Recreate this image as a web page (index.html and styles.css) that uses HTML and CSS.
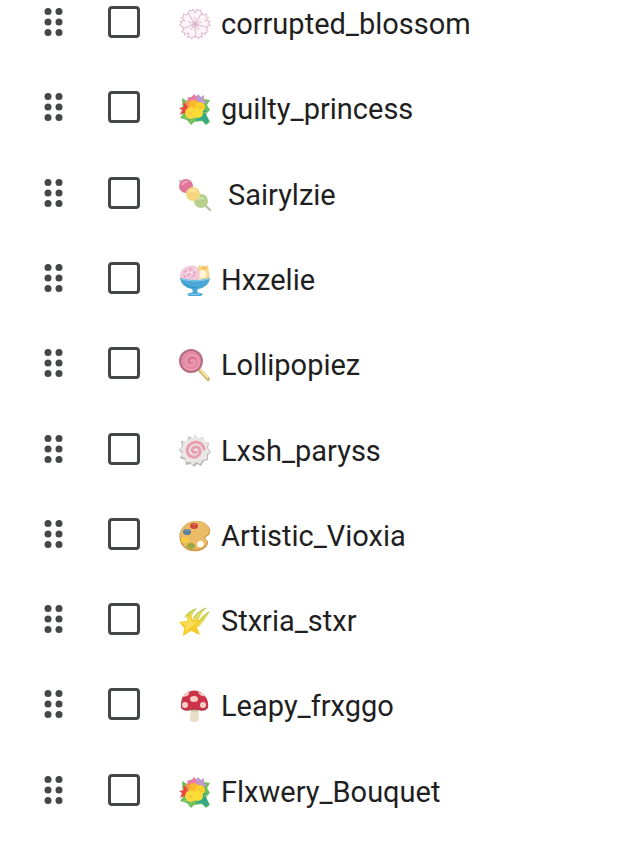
FILE: index.html
```html
<!DOCTYPE html>
<html lang="en">
<head>
  <meta charset="UTF-8">
  <meta name="viewport" content="width=device-width, initial-scale=1.0">
  <title>Checklist</title>
  <link rel="stylesheet" href="styles.css">
</head>
<body>
  <!-- Shared shapes -->
  <svg class="sprite" aria-hidden="true">
    <symbol id="dots" viewBox="0 0 40 60">
      <circle cx="10" cy="9" r="7"/><circle cx="32" cy="9" r="7"/>
      <circle cx="10" cy="30" r="7"/><circle cx="32" cy="30" r="7"/>
      <circle cx="10" cy="51" r="7"/><circle cx="32" cy="51" r="7"/>
    </symbol>
    <symbol id="petal" viewBox="0 0 32 32">
      <path d="M16 15 10 9 8 6 10 5 10 2 13 3 14 1 16 5 18 1 19 3 22 2 22 5 24 6 22 9Z"/>
      <path d="M16 14V9"/>
    </symbol>
    <symbol id="bouquet" viewBox="0 0 32 32">
      <path fill="#6cbf5a" d="M3 5 8 8 11 4 17 3 25 6 31 7 28 12 31 17 27 21 31 29 27 32 23 28 15 29 12 32 8 27 1 25 4 21Z"/>
      <path fill="#35a987" d="M20 18 28 17 27 22 30 28 27 31 23 27 17 28Z"/>
      <path fill="#ee78a8" d="M8 10 9 4 12 5 15 1 18 4 20 8 17 12 10 13Z"/>
      <path fill="#bd9bd0" d="M17 5 19 1 22 4 25 2 25 7 28 9 24 12 19 10Z"/>
      <path fill="#e9473f" d="M0 15 5 14 4 10 9 11 13 12 13 18 10 22 5 20 1 22 3 17Z"/>
      <path fill="#f4934c" d="M6 9 11 7 17 10 15 14 9 15Z"/>
      <circle cx="15" cy="12" r="5" fill="#f9b92f"/>
      <circle cx="21" cy="14" r="5" fill="#fdcf2b"/>
      <circle cx="12" cy="20" r="6" fill="#f8d83c"/>
      <circle cx="19" cy="20" r="5" fill="#fbdc35"/>
      <path fill="none" stroke="#f0b52c" d="M13 12 16 13M20 14 22 15M10 20 13 21"/>
      <path fill="none" stroke="#96d174" d="M4 25 8 24M11 29 13 27M25 20 28 19"/>
    </symbol>
  </svg>

  <ul class="checklist">
    <li class="item">
      <button class="handle" type="button" aria-label="Move corrupted_blossom"><svg><use href="#dots"/></svg></button>
      <input type="checkbox" id="item-1">
      <label for="item-1">
        <svg class="emoji" viewBox="0 0 32 32" aria-hidden="true">
          <g class="blossom">
            <use href="#petal"/>
            <use href="#petal" transform="rotate(72 16 16)"/>
            <use href="#petal" transform="rotate(144 16 16)"/>
            <use href="#petal" transform="rotate(216 16 16)"/>
            <use href="#petal" transform="rotate(288 16 16)"/>
          </g>
          <circle cx="16" cy="16" r="2" fill="#dab5cb"/>
        </svg>
        <span>corrupted_blossom</span>
      </label>
    </li>
    <li class="item">
      <button class="handle" type="button" aria-label="Move guilty_princess"><svg><use href="#dots"/></svg></button>
      <input type="checkbox" id="item-2">
      <label for="item-2">
        <svg class="emoji" aria-hidden="true"><use href="#bouquet"/></svg>
        <span>guilty_princess</span>
      </label>
    </li>
    <li class="item">
      <button class="handle" type="button" aria-label="Move Sairylzie"><svg><use href="#dots"/></svg></button>
      <input type="checkbox" id="item-3">
      <label for="item-3">
        <svg class="emoji" viewBox="0 0 32 32" aria-hidden="true">
          <path d="M1 2 31 31" stroke="#b4b9a4" stroke-width="2" stroke-linecap="round"/>
          <circle cx="7" cy="7" r="7" fill="#e0769b"/>
          <path d="M3 6Q5 2 9 3" fill="none" stroke="#f0a0b9" stroke-width="2"/>
          <circle cx="22" cy="22" r="7" fill="#b7d08e"/>
          <path d="M19 20Q21 18 25 20" fill="none" stroke="#d2e2b0" stroke-width="2"/>
          <circle cx="14" cy="15" r="7" fill="#f4d680"/>
          <path d="M11 13Q13 10 17 12" fill="none" stroke="#fae8ab" stroke-width="2"/>
        </svg>
        <span class="spaced">Sairylzie</span>
      </label>
    </li>
    <li class="item">
      <button class="handle" type="button" aria-label="Move Hxzelie"><svg><use href="#dots"/></svg></button>
      <input type="checkbox" id="item-4">
      <label for="item-4">
        <svg class="emoji" viewBox="0 0 32 32" aria-hidden="true">
          <path fill="#f5d78f" d="M18 5 20 1 25 3 29 1 30 8 31 15H18Z"/>
          <path fill="#fff4d3" d="M20 8 24 5 28 9 26 14H19Z"/>
          <circle cx="25" cy="4" r="2" fill="#f4bb50"/>
          <path fill="#f2c6d8" d="M1 15Q0 5 9 2 17 0 20 7 22 11 19 16Z"/>
          <path stroke="#c77598" stroke-width="1" stroke-linecap="round" d="M6 8 7 7M11 5H12M15 8 16 9M9 11H10M5 12 6 13M14 12 15 11"/>
          <path stroke="#fff" stroke-linecap="round" d="M8 9 9 8M12 9 13 8M16 5 17 6"/>
          <path fill="#4aa6d5" d="M1 14Q16 18 31 14 30 23 19 25L18 28 24 30 22 32H10L8 30 14 28 13 25Q2 23 1 14Z"/>
          <path fill="none" stroke="#8acdee" d="M2 15Q16 19 30 15M11 30Q16 31 21 30"/>
          <path fill="none" stroke="#3490c2" d="M5 20Q10 24 18 24"/>
        </svg>
        <span>Hxzelie</span>
      </label>
    </li>
    <li class="item">
      <button class="handle" type="button" aria-label="Move Lollipopiez"><svg><use href="#dots"/></svg></button>
      <input type="checkbox" id="item-5">
      <label for="item-5">
        <svg class="emoji" viewBox="0 0 32 32" aria-hidden="true">
          <path d="M20 20 29 30" stroke="#c9b474" stroke-width="4" stroke-linecap="round"/>
          <path d="M21 20 29 29" stroke="#f7e6a4" stroke-width="2"/>
          <circle cx="12" cy="12" r="11" fill="#e58aa6" stroke="#b56f82" stroke-width="2"/>
          <path d="M12 12Q14 9 16 12 16 17 11 17 6 16 7 10 10 4 17 7 23 12 18 19 11 23 5 18" fill="none" stroke="#efa9bd" stroke-width="1"/>
          <path d="M12 14Q9 14 9 11 12 7 17 10" fill="none" stroke="#c95f82"/>
        </svg>
        <span>Lollipopiez</span>
      </label>
    </li>
    <li class="item">
      <button class="handle" type="button" aria-label="Move Lxsh_paryss"><svg><use href="#dots"/></svg></button>
      <input type="checkbox" id="item-6">
      <label for="item-6">
        <svg class="emoji" viewBox="0 0 32 32" aria-hidden="true">
          <path fill="#bdb8b8" d="M16 0 19 4 24 2 25 7 30 8 29 13 32 17 29 20 29 25 25 26 22 31 18 29 15 32 12 29 7 30 6 25 1 23 3 18 0 15 3 11 2 6 8 6 10 1 14 4Z"/>
          <path fill="#ebe7e7" d="M16 1 19 4 24 3 25 7 29 9 28 13 31 17 28 19 28 24 24 25 21 29 17 27 14 30 11 27 7 27 6 23 2 21 4 17 1 14 4 11 4 6 8 6 11 3 14 4Z"/>
          <path d="M17 17Q14 19 13 15 15 10 20 13 23 19 17 22 10 23 8 16 9 8 17 7 24 8 25 14" fill="none" stroke="#e8a0b0" stroke-width="3" stroke-linecap="round"/>
        </svg>
        <span>Lxsh_paryss</span>
      </label>
    </li>
    <li class="item">
      <button class="handle" type="button" aria-label="Move Artistic_Vioxia"><svg><use href="#dots"/></svg></button>
      <input type="checkbox" id="item-7">
      <label for="item-7">
        <svg class="emoji" viewBox="0 0 32 32" aria-hidden="true">
          <path fill="#d49b4c" d="M16 1Q27 0 31 9 32 15 27 17 25 19 29 21 30 28 20 31 8 33 2 24-2 14 4 7 9 1 16 1Z"/>
          <path fill="#ebbb68" d="M16 1Q27 0 30 9 31 14 26 16 23 19 28 21 28 27 19 29 8 31 3 22-1 13 5 7 10 1 16 1Z"/>
          <ellipse cx="15" cy="6" rx="4" ry="3" fill="#d0463a"/>
          <ellipse cx="8" cy="12" rx="4" ry="3" fill="#567f9e"/>
          <ellipse cx="6" cy="20" rx="4" ry="3" fill="#f7cd40"/>
          <ellipse cx="12" cy="26" rx="4" ry="3" fill="#98a93e"/>
          <path fill="#fff" d="M18 24Q19 20 23 21 27 24 23 27 18 28 18 24Z"/>
          <path fill="none" stroke="#e08572" d="M14 5Q15 4 17 5"/>
          <path fill="none" stroke="#87a8c0" d="M6 11Q8 9 10 11"/>
        </svg>
        <span>Artistic_Vioxia</span>
      </label>
    </li>
    <li class="item">
      <button class="handle" type="button" aria-label="Move Stxria_stxr"><svg><use href="#dots"/></svg></button>
      <input type="checkbox" id="item-8">
      <label for="item-8">
        <svg class="emoji" viewBox="0 0 32 32" aria-hidden="true">
          <path fill="#dedc62" d="M5 12Q10 5 18 3 14 7 12 14ZM13 14Q19 5 28 2 22 8 19 16ZM17 19Q23 9 31 6 27 14 20 22Z"/>
          <path fill="none" stroke="#b0bf52" d="M8 11Q12 6 17 4M15 12Q20 6 27 3M20 18Q24 12 30 7"/>
          <path fill="#f6cb2d" d="M10 8 14 15 23 15 18 22 21 30 12 26 4 31 5 23 0 17 8 16Z"/>
          <path fill="#fade55" d="M10 11 13 17 19 17 12 22 6 27 7 21 2 18 9 17Z"/>
        </svg>
        <span>Stxria_stxr</span>
      </label>
    </li>
    <li class="item">
      <button class="handle" type="button" aria-label="Move Leapy_frxggo"><svg><use href="#dots"/></svg></button>
      <input type="checkbox" id="item-9">
      <label for="item-9">
        <svg class="emoji" viewBox="0 0 32 32" aria-hidden="true">
          <path fill="#e9dfc8" d="M12 17H19L20 28Q20 32 15 32T11 28Z"/>
          <path fill="#cfc0a4" d="M12 18H19V21Q16 22 12 21Z"/>
          <path fill="#cb3348" d="M2 17Q1 6 9 2 17-2 24 4 30 9 29 17 27 21 21 20 15 18 10 20 4 21 2 17Z"/>
          <path fill="none" stroke="#a52c3f" d="M2 17Q4 21 10 20 15 18 21 20 27 21 29 17"/>
          <g fill="#f7cdc7">
            <ellipse cx="15" cy="9" rx="4" ry="3"/>
            <circle cx="6" cy="15" r="3"/>
            <circle cx="24" cy="15" r="3"/>
            <path d="M4 7Q6 3 10 2 11 4 8 6ZM19 2Q24 3 26 6 23 7 20 4Z"/>
          </g>
        </svg>
        <span>Leapy_frxggo</span>
      </label>
    </li>
    <li class="item">
      <button class="handle" type="button" aria-label="Move Flxwery_Bouquet"><svg><use href="#dots"/></svg></button>
      <input type="checkbox" id="item-10">
      <label for="item-10">
        <svg class="emoji" aria-hidden="true"><use href="#bouquet"/></svg>
        <span>Flxwery_Bouquet</span>
      </label>
    </li>
  </ul>
</body>
</html>
```
FILE: styles.css
```css
body {
  margin: 0;
  background-color: #fff;
  color: #1f1f1f;
  font-family: Roboto, "Liberation Sans", sans-serif;
  font-size: 29px;
  line-height: 36px;
}

.sprite {
  position: absolute;
  width: 0;
  height: 0;
}

.checklist {
  display: grid;
  grid-auto-rows: 1fr;
  min-height: 100vh;
  margin: 0;
  padding: 0;
  list-style: none;
}

.item {
  display: flex;
  align-items: center;
  align-self: start;
  min-height: 44px;
  padding: 0 20px 0 43px;
}

.handle {
  width: 20px;
  height: 30px;
  padding: 0;
  border: none;
  background: none;
  cursor: grab;
}

.handle svg {
  display: block;
  width: 20px;
  height: 30px;
  fill: #444746;
}

.item input {
  appearance: none;
  box-sizing: border-box;
  width: 32px;
  height: 32px;
  margin: 0 39px 0 45px;
  border: 3px solid #444746;
  border-radius: 4px;
  cursor: pointer;
}

.item input:checked {
  background-color: #444746;
}

.item label {
  display: flex;
  align-items: center;
  gap: 10px;
  padding-top: 4px;
}

.emoji {
  width: 32px;
  height: 32px;
}

.blossom {
  fill: #fdf4f8;
  stroke: #dfbdce;
  stroke-width: 1px;
}

.spaced {
  padding-left: 7px;
}
```
